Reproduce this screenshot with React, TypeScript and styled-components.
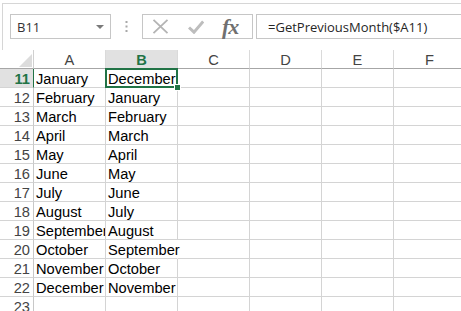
import React from "react";
import styled, { createGlobalStyle } from "styled-components";

const Global = createGlobalStyle`
  html, body { margin: 0; padding: 0; background: #fff; overflow: hidden; }
  body { width: 461px; height: 311px; }
`;

const GREEN = "#217346";
const CELL_FONT = `"Liberation Sans", Arial, sans-serif`;
const UI_FONT = `"Open Sans", "Noto Sans", sans-serif`;

const Page = styled.div`
  width: 461px;
  height: 311px;
  overflow: hidden;
  background: #fff;
`;

const TopBar = styled.div`
  box-sizing: border-box;
  margin: 3px 0 0 2px;
  height: 47px;
  border-top: 1px solid #d6d6d6;
  border-left: 1px solid #d6d6d6;
  display: flex;
  align-items: flex-start;
  padding: 10px 0 0 7px;
`;

const NameBox = styled.div`
  box-sizing: border-box;
  width: 101px;
  height: 25px;
  border: 1px solid #c6c6c6;
  display: flex;
  align-items: center;
  padding: 0 6px 0 6px;
  font-family: ${UI_FONT};
  font-size: 13px;
  color: #333;
`;

const NameText = styled.span`
  flex: 1;
`;

const DropArrow = styled.span`
  width: 0;
  height: 0;
  border-left: 4px solid transparent;
  border-right: 4px solid transparent;
  border-top: 4px solid #7a7a7a;
`;

const DotsWrap = styled.div`
  width: 31px;
  height: 25px;
  display: flex;
  align-items: center;
  justify-content: center;
`;

const FxBox = styled.div`
  box-sizing: border-box;
  width: 111px;
  height: 25px;
  border: 1px solid #c6c6c6;
  display: flex;
  align-items: center;
  padding-left: 9px;
`;

const IconSlot = styled.span<{ $gap: number }>`
  display: flex;
  margin-right: ${(p) => p.$gap}px;
`;

const Fx = styled.span`
  font-family: "Liberation Serif", "Times New Roman", serif;
  font-style: italic;
  font-size: 22px;
  font-weight: 700;
  color: #707070;
  line-height: 22px;
  letter-spacing: -1px;
  margin-top: 1px;
`;

const FormulaBox = styled.div`
  box-sizing: border-box;
  flex: 1;
  margin-left: 3px;
  margin-right: -4px;
  height: 25px;
  border: 1px solid #c6c6c6;
  display: flex;
  align-items: center;
  padding-left: 11px;
  font-family: ${UI_FONT};
  font-size: 13px;
  color: #262626;
  white-space: nowrap;
`;

const Grid = styled.div`
  position: relative;
  display: grid;
  grid-template-columns: 34px repeat(6, 72px);
  grid-auto-rows: 19px;
  font-family: ${CELL_FONT};
  font-size: 14.67px;
`;

const Corner = styled.div`
  box-sizing: border-box;
  border-right: 1px solid #d0d0d0;
  border-bottom: 1px solid #a6a6a6;
  display: flex;
  justify-content: flex-end;
  align-items: flex-end;
  padding: 0 1px 1px 0;
`;

const CornerTri = styled.span`
  width: 0;
  height: 0;
  border-left: 13px solid transparent;
  border-bottom: 13px solid #dcdcdc;
`;

const ColHead = styled.div<{ $active?: boolean }>`
  box-sizing: border-box;
  border-right: 1px solid #dadada;
  border-bottom: 1px solid ${(p) => (p.$active ? GREEN : "#a6a6a6")};
  background: ${(p) => (p.$active ? "#e1e1e1" : "#fff")};
  color: ${(p) => (p.$active ? GREEN : "#444")};
  font-weight: ${(p) => (p.$active ? 700 : 400)};
  text-align: center;
  line-height: 20px;
`;

const RowHead = styled.div<{ $active?: boolean }>`
  box-sizing: border-box;
  border-right: 1px solid ${(p) => (p.$active ? GREEN : "#c8c8c8")};
  border-bottom: 1px solid #d4d4d4;
  background: ${(p) => (p.$active ? "#e1e1e1" : "#fff")};
  color: ${(p) => (p.$active ? GREEN : "#444")};
  font-weight: ${(p) => (p.$active ? 700 : 400)};
  text-align: right;
  padding-right: 3px;
  line-height: 20px;
`;

const DataCell = styled.div<{ $spill?: boolean }>`
  box-sizing: border-box;
  border-right: 1px solid ${(p) => (p.$spill ? "transparent" : "#d4d4d4")};
  border-bottom: 1px solid #d4d4d4;
  padding-left: 2px;
  white-space: nowrap;
  line-height: 20px;
  color: #000;
  overflow-x: ${(p) => (p.$spill ? "visible" : "clip")};
  overflow-y: visible;
  position: relative;
  z-index: ${(p) => (p.$spill ? 1 : 0)};
`;

const Selection = styled.div`
  position: absolute;
  box-sizing: border-box;
  left: 105px;
  top: 18px;
  width: 73px;
  height: 20px;
  border: 2px solid ${GREEN};
  pointer-events: none;
  z-index: 2;
`;

const Handle = styled.div`
  position: absolute;
  box-sizing: border-box;
  left: 174px;
  top: 34px;
  width: 7px;
  height: 7px;
  background: ${GREEN};
  border: 1px solid #fff;
  z-index: 3;
`;

const MONTHS = [
  "January", "February", "March", "April", "May", "June",
  "July", "August", "September", "October", "November", "December",
];

const COLS = ["A", "B", "C", "D", "E", "F"];

const CancelIcon = () => (
  <svg width="17" height="15" viewBox="0 0 17 15">
    <path d="M1.5 0.8 L15.5 14.2 M15.5 0.8 L1.5 14.2" stroke="#b4b4b4" strokeWidth="1.8" fill="none" />
  </svg>
);

const CheckIcon = () => (
  <svg width="16" height="14" viewBox="0 0 16 14">
    <path d="M1 7.5 L6 12.2 L15.2 1.5" stroke="#bdbdbd" strokeWidth="3" fill="none" strokeLinejoin="miter" />
  </svg>
);

const Dots = () => (
  <svg width="3" height="11" viewBox="0 0 3 11">
    <rect x="0.5" y="0" width="2" height="2" fill="#a8a8a8" />
    <rect x="0.5" y="4.5" width="2" height="2" fill="#a8a8a8" />
    <rect x="0.5" y="9" width="2" height="2" fill="#a8a8a8" />
  </svg>
);

export default function App() {
  const rows = Array.from({ length: 13 }, (_, i) => 11 + i);
  return (
    <Page>
      <Global />
      <TopBar>
        <NameBox>
          <NameText>B11</NameText>
          <DropArrow />
        </NameBox>
        <DotsWrap>
          <Dots />
        </DotsWrap>
        <FxBox>
          <IconSlot $gap={19}>
            <CancelIcon />
          </IconSlot>
          <IconSlot $gap={18}>
            <CheckIcon />
          </IconSlot>
          <Fx>fx</Fx>
        </FxBox>
        <FormulaBox>=GetPreviousMonth($A11)</FormulaBox>
      </TopBar>
      <Grid>
        <Corner>
          <CornerTri />
        </Corner>
        {COLS.map((c) => (
          <ColHead key={c} $active={c === "B"}>
            {c}
          </ColHead>
        ))}
        {rows.map((r) => {
          const idx = r - 11;
          const a = idx < 12 ? MONTHS[idx] : "";
          const b = idx < 12 ? MONTHS[(idx + 11) % 12] : "";
          const spill = b === "September";
          return (
            <React.Fragment key={r}>
              <RowHead $active={r === 11}>{r}</RowHead>
              <DataCell>{a}</DataCell>
              <DataCell $spill={spill}>{b}</DataCell>
              <DataCell />
              <DataCell />
              <DataCell />
              <DataCell />
            </React.Fragment>
          );
        })}
        <Selection />
        <Handle />
      </Grid>
    </Page>
  );
}
